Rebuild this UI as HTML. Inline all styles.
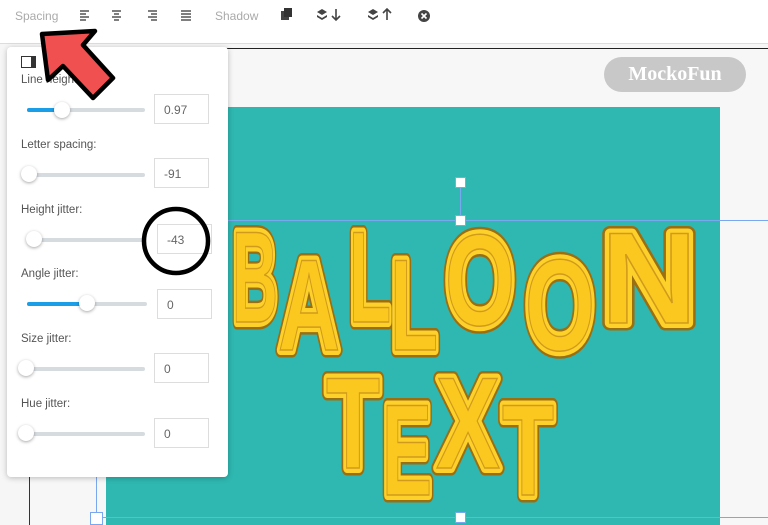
<!DOCTYPE html>
<html><head><style>
body{margin:0;width:768px;height:525px;overflow:hidden;background:#f6f6f6;font-family:"Liberation Sans",sans-serif;position:relative}
.tb{position:absolute;left:0;top:0;width:768px;height:43px;background:#fff;border-bottom:1px solid #ddd}
.tb span{position:absolute;top:9px;font-size:12px;color:#aaa}
.abs{position:absolute}
.panel{position:absolute;left:7px;top:47px;width:221px;height:430px;background:#fff;border-radius:4px;box-shadow:0 1px 6px rgba(0,0,0,.25)}
.lbl{position:absolute;left:14px;font-size:11.5px;color:#555}
.track{position:absolute;height:4px;background:#d6dbe0;border-radius:2px}
.fill{position:absolute;height:4px;background:#1a9ee8;border-radius:2px}
.knob{position:absolute;width:16px;height:16px;border-radius:50%;background:#fff;box-shadow:0 1px 3px rgba(0,0,0,.35)}
.inp{position:absolute;width:55px;height:30px;border:1px solid #ddd;font-size:12px;color:#666;line-height:30px;padding-left:9px;box-sizing:border-box}
</style></head><body>
<div class="abs" style="left:29px;top:48px;width:739px;height:1px;background:#222"></div>
<div class="abs" style="left:29px;top:48px;width:1px;height:477px;background:#333"></div>
<div class="abs" style="left:30px;top:49px;width:738px;height:476px;background:#f7f7f7"></div>
<div class="abs" style="left:106px;top:107px;width:614px;height:418px;background:#2eb8b1"></div>
<div class="abs" style="left:604px;top:57px;width:142px;height:35px;border-radius:18px;background:#c8c8c8;color:#fff;font-family:'Liberation Serif',serif;font-weight:bold;font-size:20px;text-align:center;line-height:35px">MockoFun</div>
<div class="abs" style="left:96px;top:220px;width:672px;height:1px;background:#7aa8f0"></div>
<div class="abs" style="left:96px;top:517px;width:672px;height:1px;background:#7aa8f0"></div>
<div class="abs" style="left:96px;top:220px;width:1px;height:300px;background:#7aa8f0"></div>
<div class="abs" style="left:460px;top:185px;width:1px;height:35px;background:#7aa8f0"></div>
<svg class="abs" style="left:0;top:0" width="768" height="525">
<defs>
<g id="L" font-family="Liberation Sans" font-weight="bold" font-size="130">
<text x="232" y="322" textLength="46" lengthAdjust="spacingAndGlyphs">B</text>
<text x="278" y="350" textLength="62" lengthAdjust="spacingAndGlyphs">A</text>
<text x="349" y="322" textLength="42" lengthAdjust="spacingAndGlyphs">L</text>
<text x="390" y="350" textLength="48" lengthAdjust="spacingAndGlyphs">L</text>
<text x="445" y="325" textLength="70" lengthAdjust="spacingAndGlyphs">O</text>
<text x="525" y="350" textLength="70" lengthAdjust="spacingAndGlyphs">O</text>
<text x="601" y="323" textLength="96" lengthAdjust="spacingAndGlyphs">N</text>
<text x="326" y="468" textLength="54" lengthAdjust="spacingAndGlyphs">T</text>
<text x="382" y="495" textLength="50" lengthAdjust="spacingAndGlyphs">E</text>
<text x="436" y="468" textLength="64" lengthAdjust="spacingAndGlyphs">X</text>
<text x="502" y="495" textLength="52" lengthAdjust="spacingAndGlyphs">T</text>
</g>
</defs>
<use href="#L" fill="#9a6e12" stroke="#9a6e12" stroke-width="15" stroke-linejoin="round"/>
<use href="#L" fill="#fdd02a" stroke="#fdd02a" stroke-width="10" stroke-linejoin="round"/>
<use href="#L" fill="#fbc820" stroke="#d09a1c" stroke-width="1.5"/>
<g fill="#fff" stroke="#7aa8f0" stroke-width="1">
<rect x="455.5" y="177.5" width="10" height="10"/><rect x="455.5" y="215.5" width="10" height="10"/>
<rect x="455.5" y="512.5" width="10" height="10"/><rect x="90.5" y="512.5" width="12" height="12"/>
</g>
</svg>
<div class="tb">
<span style="left:15px">Spacing</span>
<span style="left:215px">Shadow</span>
</div>
<svg class="abs" style="left:0;top:0" width="768" height="43">
<g stroke="#555" stroke-width="1.6">
<path d="M80 11h9M80 14h6M80 17h9M80 20h6"/>
<path d="M112 11h9M114 14h5M112 17h9M114 20h5"/>
<path d="M148 11h9M151 14h6M148 17h9M151 20h6"/>
<path d="M181 11h10M181 14h10M181 17h10M181 20h10"/>
</g>
<rect x="281" y="11" width="8" height="9" fill="#444"/><rect x="284" y="8" width="8" height="9" fill="#333"/>
<g fill="#444"><path d="M317 12l5-3 5 3-5 3z M317 15l5 3 5-3v2l-5 3-5-3z"/><path d="M368 12l5-3 5 3-5 3z M368 15l5 3 5-3v2l-5 3-5-3z"/></g>
<g stroke="#444" stroke-width="1.6" fill="none"><path d="M336 9v11M332 16l4 4 4-4"/><path d="M387 20v-11M383 13l4-4 4 4"/></g>
<circle cx="424" cy="16" r="6" fill="#444"/><path d="M421.5 13.5l5 5M426.5 13.5l-5 5" stroke="#fff" stroke-width="1.6"/>
</svg>
<div class="panel">
<div class="abs" style="left:14px;top:9px;width:9px;height:10px;border:1.5px solid #333;border-right:5px solid #333"></div>
<div class="lbl" style="top:27px">Line height:</div>
<div class="track" style="left:20px;top:61px;width:118px"></div><div class="fill" style="left:20px;top:61px;width:35px"></div><div class="knob" style="left:47px;top:55px"></div>
<div class="inp" style="left:147px;top:47px">0.97</div>
<div class="lbl" style="top:92px">Letter spacing:</div>
<div class="track" style="left:20px;top:126px;width:118px"></div><div class="knob" style="left:14px;top:119px"></div>
<div class="inp" style="left:147px;top:111px">-91</div>
<div class="lbl" style="top:157px">Height jitter:</div>
<div class="track" style="left:20px;top:191px;width:118px"></div><div class="knob" style="left:19px;top:184px"></div>
<div class="inp" style="left:150px;top:177px">-43</div>
<div class="lbl" style="top:221px">Angle jitter:</div>
<div class="track" style="left:20px;top:255px;width:120px"></div><div class="fill" style="left:20px;top:255px;width:60px"></div><div class="knob" style="left:72px;top:248px"></div>
<div class="inp" style="left:150px;top:242px">0</div>
<div class="lbl" style="top:286px">Size jitter:</div>
<div class="track" style="left:20px;top:320px;width:118px"></div><div class="knob" style="left:11px;top:313px"></div>
<div class="inp" style="left:147px;top:306px">0</div>
<div class="lbl" style="top:351px">Hue jitter:</div>
<div class="track" style="left:20px;top:385px;width:118px"></div><div class="knob" style="left:11px;top:378px"></div>
<div class="inp" style="left:147px;top:371px">0</div>
</div>
<svg class="abs" style="left:0;top:0" width="768" height="525">
<circle cx="176" cy="241" r="32" fill="none" stroke="#000" stroke-width="4.5"/>
<path d="M42 34 L95 31 L83 45 L113 78 L93 98 L63 66 L48 80 Z" fill="#f05050" stroke="#000" stroke-width="4.5" stroke-linejoin="round"/>
</svg>
</body></html>
